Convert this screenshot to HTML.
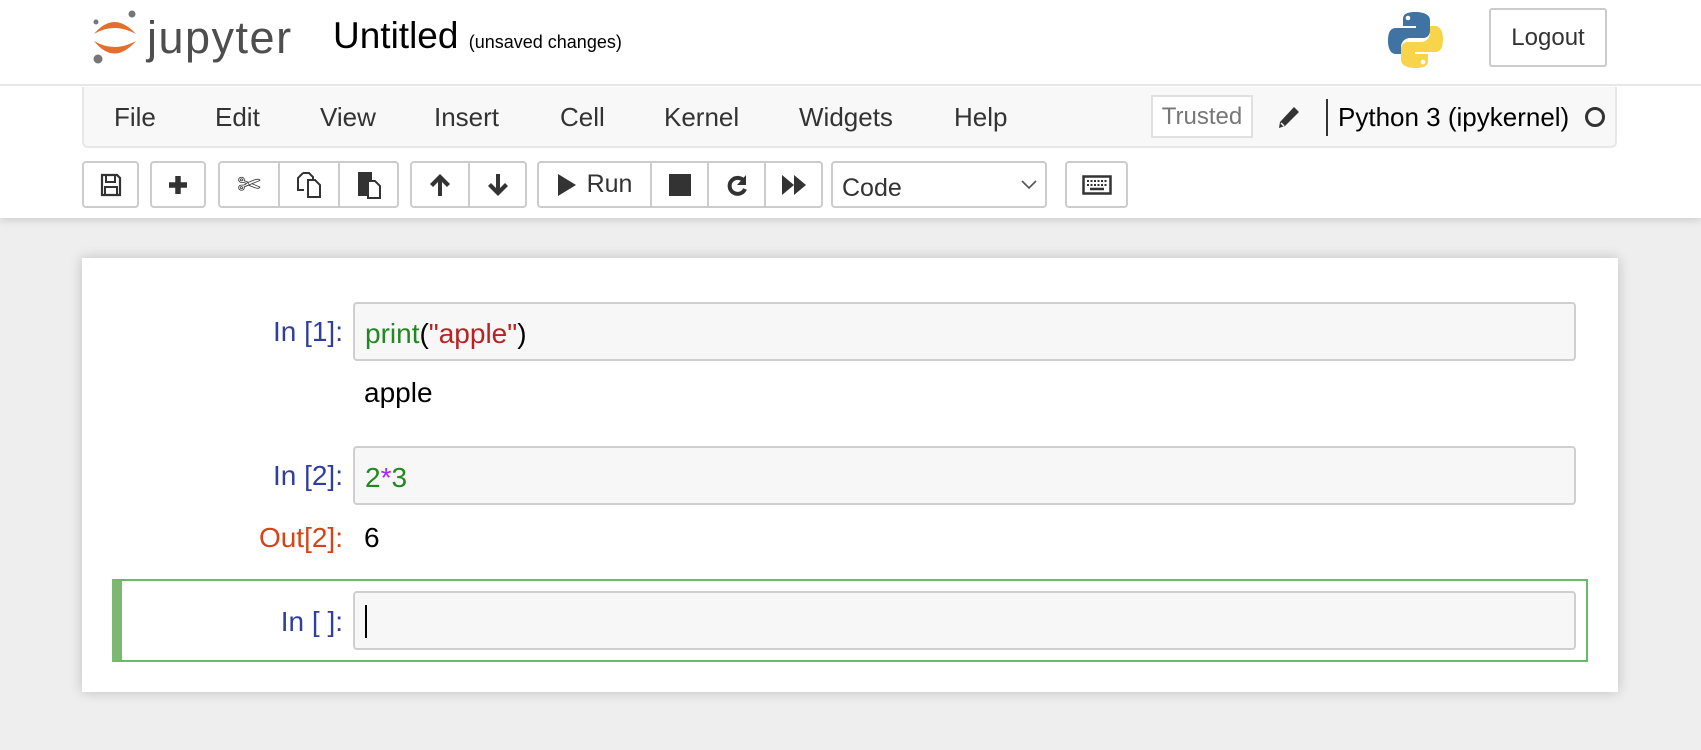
<!DOCTYPE html>
<html><head><meta charset="utf-8"><style>
*{box-sizing:border-box;margin:0;padding:0}
body{width:1701px;height:750px;overflow:hidden;background:#eeeeee;font-family:"Liberation Sans",Helvetica,Arial,sans-serif;position:relative}
.abs{position:absolute}
#hdr{left:0;top:0;width:1701px;height:218px;background:#fff;box-shadow:0 2px 8px rgba(0,0,0,.15)}
#hline{left:0;top:84px;width:1701px;height:2px;background:#e7e7e7}
#menubar{left:82px;top:87px;width:1535px;height:61px;background:#f8f8f8;border:2px solid #e7e7e7;border-top:none;border-radius:0 0 6px 6px}
.mi{top:102px;font-size:26px;color:#333}
.btn{top:161px;height:47px;border:2px solid #ccc;border-radius:4px;background:#fff;display:flex;align-items:center;justify-content:center}
.grp{display:flex;padding:0}
.grp>div{height:100%;display:flex;align-items:center;justify-content:center;border-right:2px solid #ccc}
.grp>div:last-child{border-right:none}
#nb{left:82px;top:258px;width:1536px;height:434px;background:#fff;box-shadow:0 0 12px rgba(0,0,0,.2)}
.inp{background:#f7f7f7;border:2px solid #cfcfcf;border-radius:4px;left:353px;width:1223px;height:59px;font-size:28px;padding:14px 0 0 10px}
.pr{font-size:28px;color:#303f9f;text-align:right;width:200px;left:143px}
</style></head><body>
<div id="hdr" class="abs"></div>
<div id="hline" class="abs"></div>
<!-- jupyter logo -->
<svg class="abs" style="left:92px;top:10px" width="46" height="54" viewBox="0 0 46 54">
<circle cx="40" cy="4" r="3.5" fill="#767677"/>
<circle cx="6" cy="49" r="4.5" fill="#767677"/>
<circle cx="4" cy="12" r="2.5" fill="#767677"/>
<path d="M2 24 Q22 0 44 24 Q22 12 2 24Z" fill="#e46e2e"/>
<path d="M2 31 Q22 56 44 31 Q22 43 2 31Z" fill="#e46e2e"/>
</svg>
<div class="abs" style="left:147px;top:12px;font-size:45px;color:#4e4e4e;letter-spacing:1.5px">jupyter</div>
<div class="abs" style="left:333px;top:15px;font-size:37px;color:#000">Untitled <span style="font-size:18px">(unsaved changes)</span></div>
<!-- python logo -->
<svg class="abs" style="left:1387px;top:11px" width="57" height="58" viewBox="0 0 57 58">
<path d="M28 1C16 1 16 6 16 9v6h13v2H9C3 17 1 22 1 30s3 13 8 13h5v-7c0-5 4-9 9-9h13c4 0 7-3 7-7V9c0-4-4-8-15-8z" fill="#3f73a3"/>
<circle cx="21" cy="7" r="2.3" fill="#fff"/>
<path d="M29 57c12 0 12-5 12-8v-6H28v-2h20c6 0 8-5 8-13s-3-13-8-13h-5v7c0 5-4 9-9 9H21c-4 0-7 3-7 7v11c0 4 4 8 15 8z" fill="#f8d44a"/>
<circle cx="36" cy="51" r="2.3" fill="#fff"/>
</svg>
<div class="abs" style="left:1489px;top:8px;width:118px;height:59px;border:2px solid #ccc;border-radius:3px;font-size:24px;color:#333;display:flex;align-items:center;justify-content:center">Logout</div>
<div id="menubar" class="abs"></div>
<div class="abs mi" style="left:114px">File</div>
<div class="abs mi" style="left:215px">Edit</div>
<div class="abs mi" style="left:320px">View</div>
<div class="abs mi" style="left:434px">Insert</div>
<div class="abs mi" style="left:560px">Cell</div>
<div class="abs mi" style="left:664px">Kernel</div>
<div class="abs mi" style="left:799px">Widgets</div>
<div class="abs mi" style="left:954px">Help</div>
<div class="abs" style="left:1151px;top:95px;width:102px;height:43px;border:2px solid #e0e0e0;background:#fff;font-size:24px;color:#777;display:flex;align-items:center;justify-content:center">Trusted</div>
<svg class="abs" style="left:1277px;top:105px" width="24" height="26" viewBox="0 0 24 26"><path d="M17 2l5 5L8 21l-6 2 1-6z" fill="#333"/><path d="M4 18l3 3" stroke="#f8f8f8" stroke-width="1.5"/></svg>
<div class="abs" style="left:1326px;top:99px;width:2px;height:37px;background:#333"></div>
<div class="abs" style="left:1338px;top:102px;font-size:26px;color:#000">Python 3 (ipykernel)</div>
<div class="abs" style="left:1585px;top:107px;width:20px;height:20px;border:3px solid #333;border-radius:50%"></div>
<!-- toolbar -->
<div class="abs btn" style="left:82px;width:57px"><svg width="22" height="24" viewBox="0 0 22 24"><path d="M2 2h15l3 3v17H2z" fill="none" stroke="#333" stroke-width="2.2"/><path d="M6 2v7h9V2M5 14h12v8H5z" fill="none" stroke="#333" stroke-width="2"/></svg></div>
<div class="abs btn" style="left:150px;width:56px"><svg width="22" height="22"><path d="M11 2v18M2 11h18" stroke="#333" stroke-width="5.5"/></svg></div>
<div class="abs btn grp" style="left:218px;width:181px">
<div style="width:60px;font-size:28px;color:#333">✄</div>
<div style="width:60px"><svg width="26" height="28" viewBox="0 0 26 28"><path d="M7 2h6l4 4v4M7 2L2 7v12h6" fill="none" stroke="#333" stroke-width="2"/><path d="M12 9h7l5 5v12H12z" fill="none" stroke="#333" stroke-width="2"/></svg></div>
<div style="width:57px"><svg width="26" height="30" viewBox="0 0 26 30"><path d="M2 2h14v8h-5v16H2z" fill="#333"/><path d="M12 11h7l5 5v12H12z" fill="#fff" stroke="#333" stroke-width="2"/></svg></div>
</div>
<div class="abs btn grp" style="left:410px;width:117px">
<div style="width:58px"><svg width="24" height="26" viewBox="0 0 24 26"><path d="M12 2L2 12l3 3 5-5v14h4V10l5 5 3-3z" fill="#333"/></svg></div>
<div style="width:55px"><svg width="24" height="26" viewBox="0 0 24 26"><path d="M12 24L2 14l3-3 5 5V2h4v14l5-5 3 3z" fill="#333"/></svg></div>
</div>
<div class="abs btn grp" style="left:537px;width:286px">
<div style="width:113px;font-size:25px;color:#333"><svg width="20" height="24" style="margin-right:10px"><path d="M1 1l18 11L1 23z" fill="#333"/></svg>Run</div>
<div style="width:57px"><div style="width:22px;height:22px;background:#333"></div></div>
<div style="width:57px"><svg width="22" height="24" viewBox="0 0 22 24"><path d="M18 8A8 8 0 1 0 19 16" fill="none" stroke="#333" stroke-width="4"/><path d="M20 2v10h-9z" fill="#333"/></svg></div>
<div style="width:55px"><svg width="26" height="22"><path d="M1 1l12 10L1 21zM13 1l12 10-12 10z" fill="#333"/></svg></div>
</div>
<div class="abs" style="left:831px;top:161px;width:216px;height:47px;border:2px solid #ccc;border-radius:4px;background:#fff;font-size:25px;color:#333;padding:11px 0 0 9px">Code<svg class="abs" style="left:188px;top:17px" width="16" height="10"><path d="M1 1l7 7 7-7" fill="none" stroke="#555" stroke-width="1.6"/></svg></div>
<div class="abs btn" style="left:1065px;width:63px"><svg width="30" height="20" viewBox="0 0 30 20"><rect x="1.5" y="1.5" width="27" height="17" fill="none" stroke="#333" stroke-width="2.5"/><path d="M5 6h20M5 10h20" stroke="#333" stroke-width="2" stroke-dasharray="2 1.5"/><path d="M8 14h14" stroke="#333" stroke-width="2.5"/></svg></div>
<!-- notebook -->
<div id="nb" class="abs"></div>
<div class="abs pr" style="top:316px">In [1]:</div>
<div class="abs inp" style="top:302px"><span style="color:#228822">print</span><span style="color:#000">(</span><span style="color:#ba2121">"apple"</span><span style="color:#000">)</span></div>
<div class="abs" style="left:364px;top:377px;font-size:28px;color:#000">apple</div>
<div class="abs pr" style="top:460px">In [2]:</div>
<div class="abs inp" style="top:446px"><span style="color:#228822">2</span><span style="color:#aa22ff">*</span><span style="color:#228822">3</span></div>
<div class="abs pr" style="top:522px;color:#d84315">Out[2]:</div>
<div class="abs" style="left:364px;top:522px;font-size:28px;color:#000">6</div>
<div class="abs" style="left:112px;top:579px;width:1476px;height:83px;border:2px solid #66bb6a;border-left:10px solid #7cb872;background:#fff"></div>
<div class="abs pr" style="top:606px">In [ ]:</div>
<div class="abs inp" style="top:591px;height:59px"><div style="width:2px;height:33px;background:#000;margin-top:-2px"></div></div>
</body></html>
